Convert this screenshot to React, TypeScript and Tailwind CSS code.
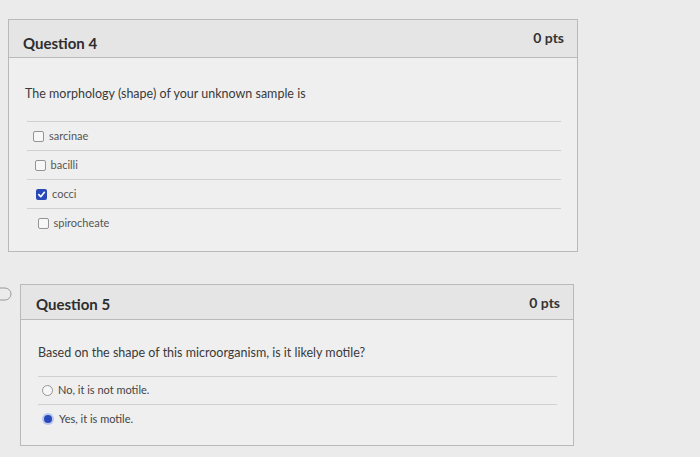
import React from "react";

const q4Options = [
  { label: "sarcinae", checked: false },
  { label: "bacilli", checked: false },
  { label: "cocci", checked: true },
  { label: "spirocheate", checked: false },
];

const q5Options = [
  { label: "No, it is not motile.", checked: false },
  { label: "Yes, it is motile.", checked: true },
];

function Checkbox({ checked }: { checked: boolean }) {
  if (checked) {
    return (
      <span className="w-[11px] h-[11px] rounded-[2px] bg-[#2a49b8] flex items-center justify-center shrink-0">
        <svg width="9" height="9" viewBox="0 0 10 10">
          <path d="M2 5.2 L4.2 7.4 L8.2 2.6" fill="none" stroke="white" strokeWidth="1.8" strokeLinecap="round" strokeLinejoin="round" />
        </svg>
      </span>
    );
  }
  return <span className="w-[11px] h-[11px] rounded-[2px] border border-[#949494] bg-[#f7f7f7] shrink-0" />;
}

function Radio({ checked }: { checked: boolean }) {
  if (checked) {
    return (
      <span className="w-[12px] h-[12px] rounded-full bg-[#b9c6ee] flex items-center justify-center shrink-0">
        <span className="w-[8px] h-[8px] rounded-full bg-[#2a49b8]" />
      </span>
    );
  }
  return <span className="w-[11px] h-[11px] rounded-full border border-[#949494] bg-[#f7f7f7] shrink-0" />;
}

export default function App() {
  return (
    <div
      className="w-[700px] h-[457px] bg-[#ebebeb] overflow-hidden text-[#2e2e2e]"
      style={{ fontFamily: "Lato, 'Open Sans', sans-serif" }}
    >
      <div className="pt-[19px] pl-[8px]">
        {/* Question 4 */}
        <div className="w-[570px] border border-[#b9b9b9] bg-[#efefef]">
          <header className="h-[38px] bg-[#e5e5e5] border-b border-[#b9b9b9] flex justify-between items-center pl-[14px] pr-[13px]">
            <h3 className="text-[15px] font-bold mt-[10px]">Question 4</h3>
            <span className="text-[14px] font-bold text-[#333] -mt-[3px]">0 pts</span>
          </header>
          <div className="pt-[28px] pb-[13px] pl-[16px] pr-[16px]">
            <p className="text-[12.5px] leading-[16px] text-[#3a3a3a]">The morphology (shape) of your unknown sample is</p>
            <div className="mt-[19px] border-t border-[#d0d0d0] ml-[2px]">
              {q4Options.map((opt, i) => (
                <div
                  key={i}
                  className={
                    "h-[29px] flex items-center gap-[5px] text-[11px] text-[#555] " +
                    (i < q4Options.length - 1 ? "border-b border-[#d0d0d0]" : "")
                  }
                  style={{ paddingLeft: 6 + i * 1.5 }}
                >
                  <Checkbox checked={opt.checked} />
                  <span>{opt.label}</span>
                </div>
              ))}
            </div>
          </div>
        </div>
      </div>

      <div className="mt-[32px] flex items-start">
        <svg width="12" height="14" viewBox="0 0 12 14" className="mt-[3px] shrink-0">
          <path d="M-2 1 H5 A6 6 0 0 1 5 13 H-2" fill="none" stroke="#9a9a9a" strokeWidth="1" />
        </svg>
        {/* Question 5 */}
        <div className="ml-[8px] w-[554px] border border-[#b9b9b9] bg-[#efefef]">
          <header className="h-[35px] bg-[#e5e5e5] border-b border-[#b9b9b9] flex justify-between items-center pl-[15px] pr-[13px]">
            <h3 className="text-[15px] font-bold mt-[4px]">Question 5</h3>
            <span className="text-[14px] font-bold text-[#333]">0 pts</span>
          </header>
          <div className="pt-[25px] pb-[12px] pl-[17px] pr-[16px]">
            <p className="text-[12.5px] leading-[16px] text-[#3a3a3a]">
              Based on the shape of this microorganism, is it likely motile?
            </p>
            <div className="mt-[15px] border-t border-[#d0d0d0]">
              {q5Options.map((opt, i) => (
                <div
                  key={i}
                  className={
                    "h-[28px] flex items-center gap-[5px] pl-[4px] text-[11px] text-[#444] " +
                    (i < q5Options.length - 1 ? "border-b border-[#d0d0d0]" : "")
                  }
                >
                  <Radio checked={opt.checked} />
                  <span>{opt.label}</span>
                </div>
              ))}
            </div>
          </div>
        </div>
      </div>
    </div>
  );
}
